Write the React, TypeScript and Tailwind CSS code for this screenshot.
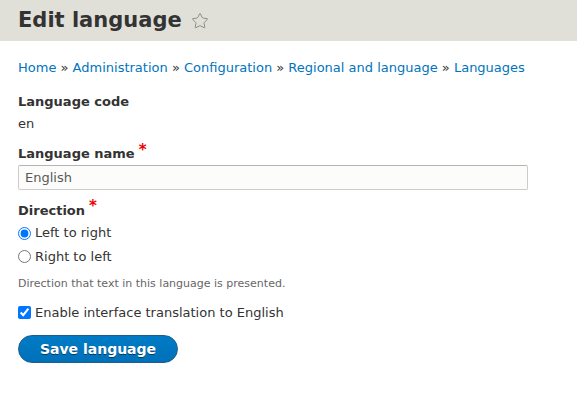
import { Star } from "lucide-react";

const crumbs = ["Home", "Administration", "Configuration", "Regional and language", "Languages"];

function Required() {
  return <span className="ml-1 text-[#e00] text-[15px] leading-none align-top">*</span>;
}

export default function App() {
  return (
    <div className="min-h-[411px] bg-white text-[13px] text-[#333]" style={{ fontFamily: '"DejaVu Sans", sans-serif' }}>
      <header className="bg-[#e0e0d8] h-[41px] px-[18px] flex items-center">
        <h1 className="text-[21px] font-bold text-[#333] flex items-center gap-[9px] leading-none">
          Edit language
          <Star className="w-[18px] h-[18px] text-[#8a8a80]" strokeWidth={1.3} />
        </h1>
      </header>

      <main className="px-[18px]">
        <nav className="pt-[17px] pb-[13px] text-[13px] text-[#0074bd]">
          {crumbs.map((c, i) => (
            <span key={c}>
              {i > 0 && <span className="text-[#333]"> » </span>}
              <a href="#" className="text-[#0074bd]">{c}</a>
            </span>
          ))}
        </nav>

        <div className="mb-[8px]">
          <div className="font-bold leading-[22px]">Language code</div>
          <div className="leading-[22px]">en</div>
        </div>

        <div className="mb-[9px]">
          <label className="font-bold leading-[22px] block">
            Language name<Required />
          </label>
          <input
            defaultValue="English"
            className="w-[510px] h-[25px] px-[6px] bg-[#fcfcfa] border border-[#ccc] border-t-[#b4b4b4] rounded-[2px] text-[13px] text-[#595959] outline-none"
          />
        </div>

        <div>
          <div className="font-bold leading-[23px]">
            Direction<Required />
          </div>
          <label className="flex items-center gap-[4px] h-[23px]">
            <input type="radio" name="dir" defaultChecked className="w-[13px] h-[13px] m-0" />
            Left to right
          </label>
          <label className="flex items-center gap-[4px] h-[24px]">
            <input type="radio" name="dir" className="w-[13px] h-[13px] m-0" />
            Right to left
          </label>
          <div className="text-[11px] text-[#666] mt-[7px]">Direction that text in this language is presented.</div>
        </div>

        <label className="flex items-center gap-[4px] h-[25px] mt-[8px]">
          <input type="checkbox" defaultChecked className="w-[13px] h-[13px] m-0" />
          Enable interface translation to English
        </label>

        <button className="mt-[10px] w-[160px] h-[28px] rounded-full bg-gradient-to-b from-[#007bc6] to-[#0071b8] border border-[#1e5c90] text-white font-bold text-[14px] [text-shadow:0_1px_rgba(0,0,0,0.5)]">
          Save language
        </button>
      </main>
    </div>
  );
}
